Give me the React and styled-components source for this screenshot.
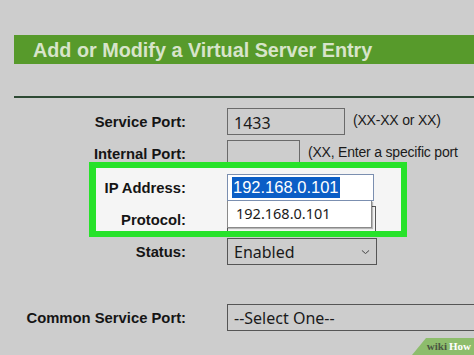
import styled, { createGlobalStyle } from "styled-components";

const GlobalStyle = createGlobalStyle`
  html, body {
    margin: 0;
    padding: 0;
    background: #cdcdcd;
  }
  body {
    width: 474px;
    height: 355px;
    overflow: hidden;
    font-family: "Liberation Sans", Arial, sans-serif;
  }
`;

export default function App() {
  return (
    <>
      <GlobalStyle />
      <Page>
        <Banner>Add or Modify a Virtual Server Entry</Banner>
        <Rule />

        <Row $top={10}>
          <Label>Service Port:</Label>
          <Input $width={118}>1433</Input>
          <Hint>(XX-XX or XX)</Hint>
        </Row>

        <Row $top={5}>
          <Label>Internal Port:</Label>
          <Input $width={73} />
          <Hint>(XX, Enter a specific port</Hint>
        </Row>

        <Highlight>
          <Row $top={6}>
            <Label $width={90}>IP Address:</Label>
            <FieldWrap>
              <ActiveInput>
                <Selected>192.168.0.101</Selected>
              </ActiveInput>
              <Suggest>192.168.0.101</Suggest>
            </FieldWrap>
          </Row>
          <Row $top={5}>
            <Label $width={90}>Protocol:</Label>
            <Select $width={149} $height={30} />
          </Row>
        </Highlight>

        <Row $top={1}>
          <Label>Status:</Label>
          <Select $width={150}>
            Enabled
            <Chevron viewBox="0 0 10 5">
              <path d="M0.5 0.5 L5 4.5 L9.5 0.5" />
            </Chevron>
          </Select>
        </Row>

        <Row $top={39}>
          <Label>Common Service Port:</Label>
          <Select $width={260}>--Select One--</Select>
        </Row>

        <Watermark>
          <span>wiki</span>
          <b>How</b>
        </Watermark>
      </Page>
    </>
  );
}

// ====== Styles ======
const Page = styled.div`
  position: relative;
  width: 474px;
  height: 355px;
  padding-top: 35px;
  box-sizing: border-box;
  overflow: hidden;
`;

const Banner = styled.div`
  margin-left: 14px;
  height: 29px;
  background: #579a2b;
  color: #d7e4ca;
  font-size: 19.8px;
  font-weight: bold;
  line-height: 30px;
  padding-left: 19px;
  white-space: nowrap;
`;

const Rule = styled.div`
  margin: 32px 0 0 14px;
  height: 2px;
  background: #2e4a34;
`;

const Row = styled.div`
  display: flex;
  align-items: center;
  height: 27px;
  margin-top: ${(p) => p.$top}px;
`;

const Label = styled.div`
  flex: none;
  width: ${(p) => p.$width ?? 186}px;
  margin-right: 41px;
  text-align: right;
  font-size: 14.8px;
  font-weight: bold;
  color: #151515;
  white-space: nowrap;
`;

const Input = styled.div`
  flex: none;
  box-sizing: border-box;
  width: ${(p) => p.$width}px;
  height: 27px;
  border: 1px solid #6a6a6a;
  font-family: "Noto Sans", sans-serif;
  font-size: 16px;
  line-height: 28px;
  padding-left: 6px;
  color: #1a1a1a;
`;

const Hint = styled.div`
  margin: 0 0 3px 8px;
  font-size: 14px;
  color: #1a1a1a;
  white-space: nowrap;
  letter-spacing: -0.2px;
`;

const Highlight = styled.div`
  position: relative;
  z-index: 1;
  margin: -5px 0 0 89px;
  width: 318px;
  height: 75px;
  box-sizing: border-box;
  border: solid #27e22a;
  border-width: 6px 6px 6px 7px;
  background: #f5f5f5;
  overflow: hidden;
`;

const FieldWrap = styled.div`
  position: relative;
  z-index: 2;
`;

const ActiveInput = styled.div`
  box-sizing: border-box;
  width: 147px;
  height: 27px;
  border: 1px solid #7b8fb0;
  background: #fff;
  padding: 2px 0 0 4px;
`;

const Selected = styled.span`
  display: inline-block;
  background: #0b5ec6;
  color: #fff;
  font-size: 16.5px;
  line-height: 21px;
  padding: 0 1px;
`;

const Suggest = styled.div`
  position: absolute;
  left: 0;
  top: 27px;
  box-sizing: border-box;
  width: 145px;
  height: 27px;
  background: #fff;
  border: 1px solid #8a8a8a;
  border-top: none;
  box-shadow: 1px 1px 1px rgba(0, 0, 0, 0.25);
  font-family: "Noto Sans", sans-serif;
  font-size: 14.5px;
  line-height: 25px;
  padding-left: 8px;
  color: #1a1a1a;
`;

const Select = styled.div`
  flex: none;
  position: relative;
  box-sizing: border-box;
  width: ${(p) => p.$width}px;
  height: ${(p) => p.$height ?? 27}px;
  align-self: ${(p) => (p.$height ? "flex-start" : "center")};
  border: 1px solid #555;
  font-family: "Noto Sans", sans-serif;
  font-size: 16px;
  line-height: 26px;
  padding-left: 6px;
  color: #1a1a1a;
  white-space: nowrap;
`;

const Chevron = styled.svg`
  position: absolute;
  right: 6px;
  top: 11px;
  width: 9px;
  height: 4px;
  fill: none;
  stroke: #333;
  stroke-width: 1.1;
`;

const Watermark = styled.div`
  position: absolute;
  right: 0;
  bottom: 0;
  width: 62px;
  height: 17px;
  background: #8dbd6c;
  clip-path: polygon(14px 0, 100% 0, 100% 100%, 0 100%);
  font-family: "Liberation Serif", serif;
  font-size: 11px;
  font-weight: bold;
  line-height: 17px;
  text-align: right;
  padding-right: 3px;
  box-sizing: border-box;

  span {
    color: #4a5642;
  }
  b {
    color: #fff;
    margin-left: 2px;
  }
`;
